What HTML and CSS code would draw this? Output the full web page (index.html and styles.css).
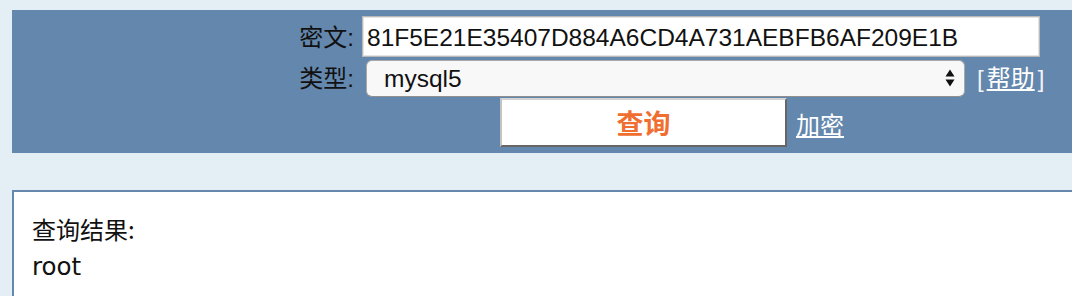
FILE: index.html
```html
<!DOCTYPE html>
<html lang="zh-CN">
<head>
<meta charset="utf-8">
<title>查询</title>
<link rel="stylesheet" href="styles.css">
</head>
<body>
<div class="page">
  <form class="panel">
    <div class="row">
      <label class="label">密文:</label>
      <input class="cipher" type="text" value="81F5E21E35407D884A6CD4A731AEBFB6AF209E1B">
    </div>
    <div class="row row-type">
      <label class="label">类型:</label>
      <span class="sel-wrap">
        <select class="type-select">
          <option>mysql5</option>
        </select>
        <svg class="sel-arrows" width="10" height="18" viewBox="0 0 10 18"><path d="M0.5 7.5 L5 0.5 L9.5 7.5 Z M0.5 10.5 L9.5 10.5 L5 17.5 Z" fill="#111"/></svg>
      </span>
      <span class="help"><span class="br-open">[</span><a href="#" class="link">帮助</a><span class="br-close">]</span></span>
    </div>
    <div class="row row-action">
      <button type="button" class="query-btn">查询</button>
      <a href="#" class="link encrypt">加密</a>
    </div>
  </form>
  <div class="result">
    <div class="result-title">查询结果:</div>
    <div class="result-value">root</div>
  </div>
</div>
</body>
</html>
```
FILE: styles.css
```css
html, body {
  overflow: hidden;
}
body {
  margin: 0;
  padding: 10px 0 0 12px;
  background: #e3eef5;
  font-family: "Liberation Sans", "Noto Sans CJK SC", sans-serif;
  color: #111;
}
.page {
  width: 1080px;
}
.panel {
  margin: 0;
  background: #6487ad;
  padding: 6px 0 6px 0;
}
.row {
  display: flex;
  align-items: baseline;
}
.row-type {
  margin-top: 3px;
}
.row-action {
  margin-top: 1px;
  padding-left: 488px;
}
.label {
  width: 342px;
  margin-right: 8px;
  text-align: right;
  font-size: 24px;
  line-height: 1;
  color: #111;
}
.cipher {
  box-sizing: border-box;
  width: 678px;
  height: 41px;
  margin: 0;
  padding: 2px 4px 0;
  border: 1px solid #b9b9b9;
  box-shadow: inset 0 0 0 1px #e4e4e4;
  background: #fff;
  font-family: "Liberation Sans", sans-serif;
  font-size: 24.5px;
  color: #111;
  outline: none;
}
.sel-wrap {
  position: relative;
  display: inline-block;
  margin-left: 4px;
}
.type-select {
  -webkit-appearance: none;
  appearance: none;
  box-sizing: border-box;
  width: 599px;
  height: 37px;
  margin: 0;
  padding: 0 30px 0 17px;
  border: 1px solid #a9a9a9;
  border-bottom-color: #8f8f8f;
  border-radius: 6px;
  background: #f8f8f8;
  font-family: "Liberation Sans", sans-serif;
  font-size: 24.5px;
  color: #111;
  outline: none;
}
.sel-arrows {
  position: absolute;
  right: 10px;
  top: 9px;
  pointer-events: none;
}
.help {
  margin-left: 12px;
  font-size: 24px;
  line-height: 1;
  color: #f2f4f7;
}
.br-open {
  margin-right: 3px;
}
.br-close {
  margin-left: 3px;
}
.link {
  color: #fff;
  text-decoration: underline;
  text-underline-offset: 2px;
}
.query-btn {
  box-sizing: border-box;
  width: 287px;
  height: 49px;
  margin: 0;
  padding: 0;
  border: 2px solid;
  border-color: #d4d4d4 #666 #666 #c2c2c2;
  background: #fff;
  font-family: "Noto Sans CJK SC", sans-serif;
  font-weight: bold;
  font-size: 27px;
  color: #ef6e30;
}
.encrypt {
  margin-left: 9px;
  font-size: 24px;
  line-height: 1;
}
.result {
  margin-top: 37px;
  border: 2px solid #6688ae;
  background: #fff;
  padding: 19px 18px 40px;
  min-height: 200px;
}
.result-title {
  font-family: "Noto Sans CJK SC", sans-serif;
  font-size: 24px;
  line-height: 36px;
  color: #111;
}
.result-value {
  margin-top: 2px;
  font-family: "DejaVu Sans", sans-serif;
  font-size: 24.5px;
  line-height: 36px;
  color: #111;
}
```
